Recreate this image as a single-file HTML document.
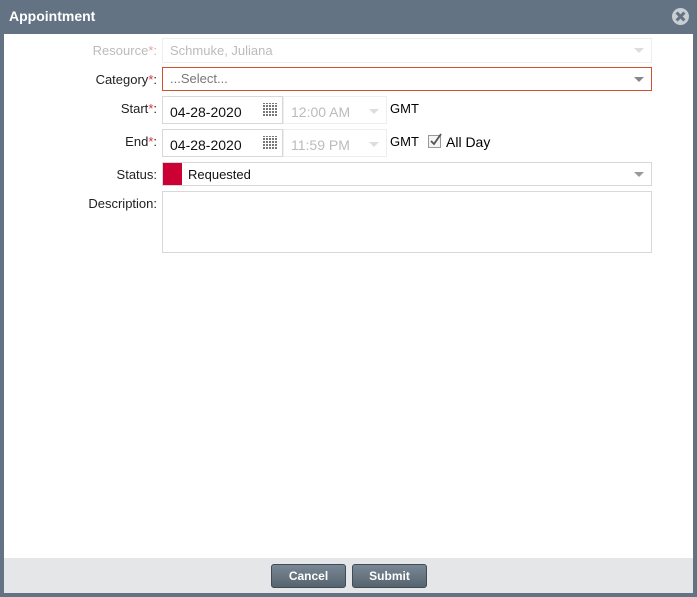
<!DOCTYPE html>
<html><head><style>
*{box-sizing:border-box;margin:0;padding:0}
body{width:697px;height:597px;background:#637383;font-family:"Liberation Sans",Arial,sans-serif;font-size:13px;position:relative;overflow:hidden}
.title{position:absolute;left:9px;top:8px;color:#fff;font-weight:bold;font-size:14px}
.close{position:absolute;left:672px;top:8px;width:17px;height:17px;border-radius:50%;background:#c8ced4}
.close:before,.close:after{content:"";position:absolute;left:3px;top:7px;width:11px;height:3px;background:#637383;transform:rotate(45deg)}
.close:after{transform:rotate(-45deg)}
.main{position:absolute;left:4px;top:34px;width:689px;height:524px;background:#fff}
.foot{position:absolute;left:4px;top:558px;width:689px;height:35px;background:#e4e6e8}
.lbl{position:absolute;right:540px;color:#222;text-align:right;white-space:nowrap}
.lbl i{font-style:normal;color:#e03030}
.box{position:absolute;border:1px solid #d8d8d8;background:#fff;padding-left:7px;color:#111;white-space:nowrap}
.arr{position:absolute;right:7px;top:9px;width:0;height:0;border-left:5px solid transparent;border-right:5px solid transparent;border-top:5px solid #999}
.cal{position:absolute;right:4px;top:6px;width:15px;height:13px;background:
repeating-linear-gradient(90deg,#777 0 2px,transparent 2px 3px),#fff;
-webkit-mask:repeating-linear-gradient(0deg,#000 0 2px,transparent 2px 3px)}
.btn{position:absolute;top:564px;height:24px;width:75px;border:1px solid #3e4c59;border-radius:3px;background:linear-gradient(#7a8896,#56646f);color:#fff;font-weight:bold;font-size:12px;text-align:center;line-height:22px}
.d{font-size:14px}
</style></head><body>
<div class="title">Appointment</div>
<div class="close"></div>
<div class="main"></div>
<div class="foot"></div>

<div class="lbl" style="top:43px;color:#bbb">Resource<i style="color:#f0a0a0">*</i>:</div>
<div class="box" style="left:162px;top:38px;width:490px;height:25px;line-height:23px;color:#bbb;border-color:#eee">Schmuke, Juliana<span class="arr" style="border-top-color:#ddd"></span></div>

<div class="lbl" style="top:72px">Category<i>*</i>:</div>
<div class="box" style="left:162px;top:67px;width:490px;height:24px;line-height:22px;color:#777;border-color:#d05030">...Select...<span class="arr" style="border-top-color:#888"></span></div>

<div class="lbl" style="top:101px">Start<i>*</i>:</div>
<div class="box d" style="left:162px;top:96px;width:121px;height:28px;line-height:30px">04-28-2020<span class="cal"></span></div>
<div class="box d" style="left:283px;top:96px;width:104px;height:28px;line-height:30px;color:#bbb;border-color:#eee">12:00 AM<span class="arr" style="top:12px;border-top-color:#ddd"></span></div>
<div style="position:absolute;left:390px;top:101px">GMT</div>

<div class="lbl" style="top:134px">End<i>*</i>:</div>
<div class="box d" style="left:162px;top:129px;width:121px;height:28px;line-height:30px">04-28-2020<span class="cal"></span></div>
<div class="box d" style="left:283px;top:129px;width:104px;height:28px;line-height:30px;color:#bbb;border-color:#eee">11:59 PM<span class="arr" style="top:12px;border-top-color:#ddd"></span></div>
<div style="position:absolute;left:390px;top:134px">GMT</div>
<div style="position:absolute;left:428px;top:135px;width:13px;height:13px;border:1px solid #999;background:#f4f4f4"><svg width="13" height="13" style="position:absolute;left:0;top:-3px"><path d="M2 8 L5 11 L12 1" stroke="#555" stroke-width="1.8" fill="none"/></svg></div>
<div style="position:absolute;left:446px;top:134px;font-size:14px">All Day</div>

<div class="lbl" style="top:167px">Status:</div>
<div class="box" style="left:162px;top:162px;width:490px;height:24px;line-height:23px;padding-left:25px">Requested<span style="position:absolute;left:0;top:0;width:19px;height:22px;background:#cc0033"></span><span class="arr"></span></div>

<div class="lbl" style="top:196px">Description:</div>
<div class="box" style="left:162px;top:191px;width:490px;height:62px"></div>

<div class="btn" style="left:271px">Cancel</div>
<div class="btn" style="left:352px">Submit</div>
</body></html>
